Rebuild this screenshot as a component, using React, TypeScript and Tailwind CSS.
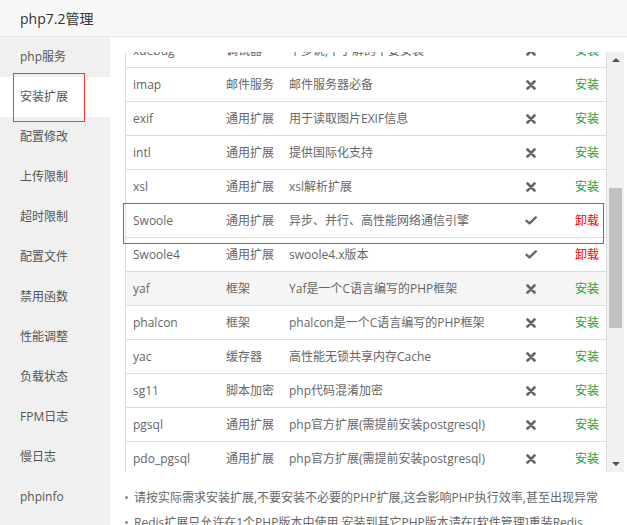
import React from "react";

type Ext = {
  name: string;
  type: string;
  desc: string;
  installed: boolean;
  hover?: boolean;
};

const exts: Ext[] = [
  { name: "xdebug", type: "调试器", desc: "不多说,不了解的不要安装", installed: false },
  { name: "imap", type: "邮件服务", desc: "邮件服务器必备", installed: false },
  { name: "exif", type: "通用扩展", desc: "用于读取图片EXIF信息", installed: false },
  { name: "intl", type: "通用扩展", desc: "提供国际化支持", installed: false },
  { name: "xsl", type: "通用扩展", desc: "xsl解析扩展", installed: false },
  { name: "Swoole", type: "通用扩展", desc: "异步、并行、高性能网络通信引擎", installed: true },
  { name: "Swoole4", type: "通用扩展", desc: "swoole4.x版本", installed: true },
  { name: "yaf", type: "框架", desc: "Yaf是一个C语言编写的PHP框架", installed: false, hover: true },
  { name: "phalcon", type: "框架", desc: "phalcon是一个C语言编写的PHP框架", installed: false },
  { name: "yac", type: "缓存器", desc: "高性能无锁共享内存Cache", installed: false },
  { name: "sg11", type: "脚本加密", desc: "php代码混淆加密", installed: false },
  { name: "pgsql", type: "通用扩展", desc: "php官方扩展(需提前安装postgresql)", installed: false },
  { name: "pdo_pgsql", type: "通用扩展", desc: "php官方扩展(需提前安装postgresql)", installed: false },
];

const menu = [
  "php服务",
  "安装扩展",
  "配置修改",
  "上传限制",
  "超时限制",
  "配置文件",
  "禁用函数",
  "性能调整",
  "负载状态",
  "FPM日志",
  "慢日志",
  "phpinfo",
];

function CrossIcon() {
  return (
    <svg width="10" height="10" viewBox="0 0 10 10" className="block">
      <path d="M1.5 1.5 L8.5 8.5 M8.5 1.5 L1.5 8.5" stroke="#666" strokeWidth="2.6" strokeLinecap="round" />
    </svg>
  );
}

function CheckIcon() {
  return (
    <svg width="12" height="9" viewBox="0 0 12 9" className="block">
      <path d="M1.5 4.8 L4.5 7.4 L10.8 1.4" stroke="#666" strokeWidth="2.4" strokeLinecap="round" strokeLinejoin="round" fill="none" />
    </svg>
  );
}

function Row({ ext }: { ext: Ext }) {
  return (
    <div
      className={`flex h-[34px] items-center border-b border-[#ddd] text-[12px] text-[#666] ${
        ext.hover ? "bg-[#f5f5f5]" : "bg-white"
      }`}
    >
      <div className="w-[92px] shrink-0 pl-[7px]">{ext.name}</div>
      <div className="w-[63px] shrink-0 pl-2">{ext.type}</div>
      <div className="min-w-0 flex-1 whitespace-nowrap pl-2">{ext.desc}</div>
      <div className="flex w-[50px] shrink-0 justify-center">
        {ext.installed ? <CheckIcon /> : <CrossIcon />}
      </div>
      <div className="w-[50px] shrink-0 pr-[7px] text-right">
        {ext.installed ? (
          <span className="text-[#ff0000]">卸载</span>
        ) : (
          <span className="text-[#20a53a]">安装</span>
        )}
      </div>
    </div>
  );
}

export default function App() {
  return (
    <div
      className="relative h-[525px] w-[627px] overflow-hidden bg-white"
      style={{ fontFamily: '"Open Sans", "Noto Sans CJK SC", sans-serif' }}
    >
      <div className="flex h-[37px] items-center border-b border-[#e6e6e6] bg-[#f7f7f7] pl-5 text-[14px] text-[#333]">
        php7.2管理
      </div>

      <div className="flex">
        <div className="w-[110px] shrink-0 bg-[#f0f0f0] h-[488px]">
          {menu.map((m) => (
            <div
              key={m}
              className={`flex h-10 items-center pl-5 text-[12px] text-[#555] ${
                m === "安装扩展" ? "bg-white" : ""
              }`}
            >
              {m}
            </div>
          ))}
        </div>

        <div className="min-w-0 flex-1 pl-[15px] pt-[15px]">
          <div className="flex">
            <div className="h-[420px] w-[482px] overflow-hidden border-x border-[#ddd]">
              <div className="-mt-[18px]">
                {exts.map((e) => (
                  <Row key={e.name} ext={e} />
                ))}
              </div>
            </div>
            <div className="flex h-[420px] w-[17px] flex-col items-center bg-[#f1f1f1]">
              <div className="mt-[6px] h-0 w-0 border-x-[4px] border-b-[4px] border-x-transparent border-b-[#505050]" />
              <div className="mt-[126px] h-[140px] w-[13px] bg-[#c1c1c1]" />
              <div className="mt-auto mb-[6px] h-0 w-0 border-x-[4px] border-t-[4px] border-x-transparent border-t-[#505050]" />
            </div>
          </div>

          <ul className="mt-[13px] text-[12px] text-[#666]">
            <li className="flex h-[25px] items-center whitespace-nowrap">
              <span className="mr-[6px] inline-block h-[3px] w-[3px] rounded-full bg-[#888]" />
              请按实际需求安装扩展,不要安装不必要的PHP扩展,这会影响PHP执行效率,甚至出现异常
            </li>
            <li className="flex h-[25px] items-center whitespace-nowrap">
              <span className="mr-[6px] inline-block h-[3px] w-[3px] rounded-full bg-[#888]" />
              Redis扩展只允许在1个PHP版本中使用,安装到其它PHP版本请在[软件管理]重装Redis
            </li>
          </ul>
        </div>
      </div>

      <div className="pointer-events-none absolute left-[13px] top-[73px] h-[49px] w-[72px] border border-[#f03c3c]" />
      <div className="pointer-events-none absolute left-[123px] top-[203px] h-[41px] w-[481px] border border-[#f03c3c]" />
    </div>
  );
}
